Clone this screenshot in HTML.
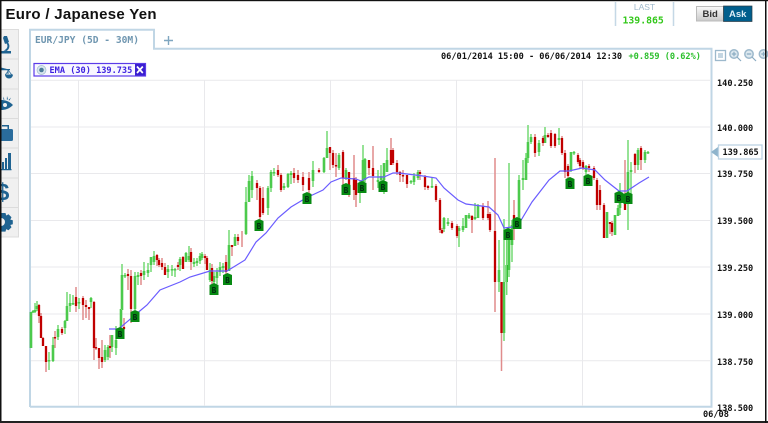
<!DOCTYPE html>
<html><head><meta charset="utf-8"><style>
html,body{margin:0;padding:0;background:#fff;width:768px;height:423px;overflow:hidden}
svg{display:block}
.m{font-family:"DejaVu Sans Mono","Liberation Mono",monospace;font-weight:bold;font-size:8.6px}
.a{fill:#111}
</style></head><body>
<svg width="768" height="423" viewBox="0 0 768 423" xmlns="http://www.w3.org/2000/svg">
<rect width="768" height="423" fill="#fff"/>
<!-- sidebar -->
<g fill="#f0f0f0" stroke="#dcdcdc" stroke-width="1">
<rect x="1" y="29.500" width="17.500" height="29.500"/><rect x="1" y="59" width="17.500" height="30"/><rect x="1" y="89" width="17.500" height="29.500"/><rect x="1" y="118.500" width="17.500" height="29.500"/><rect x="1" y="148" width="17.500" height="30"/><rect x="1" y="178" width="17.500" height="29.500"/><rect x="1" y="207.500" width="17.500" height="29.500"/>
</g>
<g fill="#1f6391" stroke="none">
<!-- microscope -->
<path d="M1 51h10v2.500H1zM4 36h3l2 6-4 2-2-6z"/>
<path d="M7.500 42a5.500 5.500 0 0 1-1 9l-3-.5a4 4 0 0 0 2-1 4 4 0 0 0 .500-6.500z" />
<!-- scales -->
<path d="M1 67.500l6 1.500 3 0v1.300H1zM7.500 70h1v4h-1zM5 74.500h8a4 4 0 0 1-8 0z"/>
<path d="M8.500 70l-3.500 4.500h1l2.500-3.500 2.500 3.500h1z"/>
<!-- eye -->
<path fill-rule="evenodd" d="M1 100c4 0 8 1 12 5-4 4-8 5-12 5zM3 105a2 2 0 1 0 4 0 2 2 0 1 0-4 0z"/>
<path d="M3 96.500l1.500 3-1 .300zM7 96l1 3.500-1.200 0zM11 97.500l-1.500 3-1-.500z"/>
<!-- briefcase -->
<path d="M1 129h10.500a1.500 1.500 0 0 1 1.500 1.500v9a1.500 1.500 0 0 1-1.500 1.500H1z" fill="#2a6c9c"/>
<path d="M2 125h7v4H7.500v-2.500H2z"/>
<!-- chart -->
<path d="M2 162h2v7H2zM5 158h2v11H5zM8 153h3v16H8zM1 169h10.500v1.300H1z"/>
<!-- gear -->
<path fill-rule="evenodd" d="M1 213h4.500l.700 2.500 2.300-1.200 3 3-1.200 2.300 2.500.700v4l-2.500.700 1.200 2.300-3 3-2.300-1.200-.700 2.500H1zM1 218v8a4 4 0 0 0 0-8z"/>
</g>
<text x="-4" y="200" font-family="'Liberation Sans',sans-serif" font-weight="bold" font-size="24" fill="#1f6391">$</text>
<!-- frame -->
<rect x="0" y="0" width="768" height="1.200" fill="#111"/>
<rect x="0" y="0" width="1.500" height="423" fill="#111"/>
<rect x="0" y="421" width="768" height="2" fill="#222"/>
<rect x="765" y="0" width="1.500" height="423" fill="#111"/>
<!-- title -->
<text x="5.500" y="19" font-family="'Liberation Sans',sans-serif" font-weight="bold" font-size="15" letter-spacing=".3" fill="#111">Euro / Japanese Yen</text>
<!-- last -->
<path d="M615.500 2V26M673.500 2V26" stroke="#c5d8e6" stroke-width="1.500"/>
<text x="644.500" y="10" text-anchor="middle" font-family="'Liberation Sans',sans-serif" font-size="8.500" fill="#9fb9cc">LAST</text>
<text x="622.500" y="23.500" font-family="'DejaVu Sans Mono',monospace" font-weight="bold" font-size="9.800" fill="#33c81a">139.865</text>
<!-- bid/ask -->
<defs><linearGradient id="bg" x1="0" y1="0" x2="0" y2="1"><stop offset="0" stop-color="#fafafa"/><stop offset="1" stop-color="#c9c9c9"/></linearGradient></defs>
<rect x="696.500" y="6.500" width="27" height="14.500" fill="url(#bg)" stroke="#bbb"/>
<rect x="723.500" y="6" width="28.500" height="15.500" fill="#005e8c" stroke="#2b3a44" stroke-width=".7"/>
<text x="702.500" y="17.200" font-family="'Liberation Sans',sans-serif" font-weight="bold" font-size="9.500" fill="#333">Bid</text>
<text x="729" y="17.200" font-family="'Liberation Sans',sans-serif" font-weight="bold" font-size="9.500" fill="#dfeef6">Ask</text>
<!-- plot frame -->
<path d="M30 407V29.700H154V48.700H711.500V406.700H30" fill="none" stroke="#c0d6e5" stroke-width="2"/>
<text x="35" y="43" font-family="'DejaVu Sans Mono',monospace" font-weight="bold" font-size="9.600" fill="#6f96b0">EUR/JPY (5D - 30M)</text>
<path d="M164 40.500h9M168.500 36v9" stroke="#7fa6c0" stroke-width="1.400"/>
<!-- grid -->
<path d="M31 80.300H711M31 127H711M31 173.500H711M31 220.500H711M31 267H711M31 314H711M31 360.800H711M78.500 80V406M204.500 80V406M330.500 80V406M456.500 80V406M582.500 80V406" stroke="#e9e9ec" stroke-width="1"/>
<!-- header text -->
<text x="441" y="59" class="m" fill="#111">06/01/2014 15:00 - 06/06/2014 12:30</text>
<text x="628.500" y="59" class="m" fill="#2bbf2b">+0.859 (0.62%)</text>
<!-- legend -->
<rect x="34" y="63.500" width="111.500" height="12.500" fill="#f8f7ff" stroke="#5a3be8" stroke-width="1.200"/>
<circle cx="41.500" cy="70" r="4.500" fill="#d8e6ee" stroke="#9fbccc" stroke-width=".7"/><circle cx="41.500" cy="70" r="2.300" fill="#4d7d99"/>
<text x="49.500" y="73" class="m" fill="#3b1fe0">EMA (30) 139.735</text>
<rect x="135" y="64" width="10" height="11.500" fill="#3a1fd0"/>
<path d="M137 66.500l5.800 6.500M142.800 66.500l-5.800 6.500" stroke="#fff" stroke-width="1.700"/>
<!-- tool icons -->
<g fill="none" stroke="#9db9cc" stroke-width="1.300">
<rect x="715.500" y="50.500" width="10" height="10"/>
</g>
<rect x="718" y="53" width="5" height="5" fill="#c4d6e2"/>
<g fill="#dce8ef" stroke="#9db9cc" stroke-width="1.500">
<circle cx="734" cy="54" r="4.200"/><circle cx="749" cy="54" r="4.200"/><circle cx="763.500" cy="54" r="4.200"/>
</g>
<path d="M737 57l4 4M752 57l4 4M731.800 54h4.400M734 51.800v4.400M746.800 54h4.400M761.300 54h4.400M763.500 51.800v4.400" stroke="#8aacc2" stroke-width="1.200"/>
<rect x="765" y="40" width="1.500" height="30" fill="#111"/>
<!-- candle wicks -->
<g fill="none">
<path stroke="#74da74" stroke-width="1.500" d="M31 312V348M33 310V313M35 303V313M37 301V311M49 352V370M53 337V362M58 325V340M65 320V334M67 292V321M70 294V312M73 295V305M79 298V309M91 297V308M105 345V362M108 345V360M112 335V352M116 326V355M121 309V335M122 264V300M125 273V278M135 272V310M138 272V285M144 262V280M148 263V277M151 258V272M154 251V265M168 265V278M172 265V276M175 268V277M180 257V271M186 252V262M189 246V262M194 258V267M197 258V266M200 253V264M202 252V260M210 263V282M214 272V285M217 268V284M220 262V276M223 263V273M229 230V271M235 234V245M246 187V235M249 175V202M252 171V198M268 186V215M271 170V192M274 168V176M284 183V190M288 173V188M291 171V184M313 161V187M324 157V173M327 131V158M339 153V170M346 168V180M360 180V203M363 145V180M365 158V182M378 170V188M381 165V190M384 163V194M387 148V170M411 180V184M414 173V185M418 170V180M432 177V188M444 217V232M448 218V226M459 226V247M463 218V232M466 215V228M469 213V219M475 203V220M478 204V218M499 240V292M504 219V341M506.700 240V295M509 163V277M512 220V262M519 175V227M523 160V190M526 153V180M528 125V163M531 134V144M539 140V156M545 127V143M559 128V145M571 152V172M574 151V155M586 165V175M607 213V238M615 215V235M618 205V216M620 183V215M628 140V230M631 162V200M638 148V170M645 150V163M648 151V154"/>
<path stroke="#e08c8c" stroke-width="1.500" d="M39 304V323M41 313V338M43 337V346M46 346V372M55 331V348M62 327V335M76 287V312M83 296V320M86 300V318M89 307V320M94 301V360M96 338V350M99 348V369M102 340V368M110 335V358M124 318V330M128 269V290M131 270V323M141 270V285M157 254V266M159 258V267M162 258V270M165 263V275M178 262V270M183 256V269M191 248V270M205 254V264M207 256V270M212 264V284M226 255V282M232 245V256M238 234V245M242 231V247M257 180V200M260 186V220M263 187V215M278 165V177M281 173V192M294 168V183M298 170V183M303 172V191M309 172V198M319 168V173M330 147V170M333 150V168M336 153V177M343 150V187M349 172V197M354 155V200M356 177V207M369 160V175M373 146V190M391 138V163M393 148V165M397 160V175M400 171V182M403 170V182M407 175V188M420 170V180M425 175V190M428 185V190M436 184V202M440 198V233M442 228V234M452 221V230M457 224V238M472 215V233M483 203V220M488 201V220M490 212V232M495 158V312M501.500 282V371M514 200V240M535 134V157M543 136V146M548 133V138M551 130V148M555 133V148M562 136V155M565 150V178M568 164V178M578 153V164M580 158V168M583 160V170M589 164V172M594 166V180M597 178V210M600 185V210M604 203V238M610 222V234M612 221V236M625 160V210M635 153V173M641 146V170"/>
<!-- green bodies -->
<g stroke="#28bb28" stroke-width="2.500">
<path id="gb" d="M31 312V348M33 311V312.500M35 310V312M37 306V309M49 360V361.500M53 345V361M58 329V337M65 321V328M67 306V321M70 303V306M73 303V304.500M79 302V303.500M91 298V302M105 350V360M108 347V357M112 335V347M116 340V348M121 309V327M122 275V310M125 275V276.500M135 276V309M138 275V277M144 271V275M148 270V273M151 257V265M154 256V262M168 269V272M172 269V270.500M175 269V270.500M180 259V265M186 253V262M189 256V260M194 262V264M197 261V263M200 256V261M202 254V258M210 270V280M214 276V282M217 272V278M220 267V272M223 266V268M229 245V271M235 237V246M246 202V234M249 181V202M252 176V190M268 188V208M271 172V188M274 172V173.500M284 186V188M288 174V187M291 173V175M313 170V181M324 158V172M327 148V158M339 155V168M346 170V178M360 190V192M363 160V182M365 159V180M378 180V182M381 176V180M384 163V180M387 160V172M411 181V182.500M414 176V182M418 172V178M432 186V187.500M444 218V229M448 222V224M459 228V231M463 226V230M466 215V228M469 215V218M475 217V219M478 206V218M499 270V282M504 282V333M506.700 265V282M509 240V270M512 225V245M519 180V222M523 178V180M526 158V180M528 142V158M531 137V142M539 143V152M545 135V143M559 138V140M571 152V170M574 152V153.500M586 166V172M607 212V238M615 215V235M618 208V216M620 195V208M628 172V200M631 170V172M638 150V165M645 152V160M648 152V153.500"/>
</g>
<use href="#gb" stroke="#90e690" stroke-width=".7"/>
<!-- red bodies -->
<path stroke="#c00000" stroke-width="2.300" d="M39 305V316M41 316V338M43 338V346M46 346V362M55 337V338.500M62 329V333M76 297V306M83 298V305M86 305V307M89 307V309M94 302V348M96 347V348.500M99 348V358M102 357V362M110 346V348M124 327V329M128 274V276M131 276V309M141 273V276M157 255V260M159 260V265M162 263V267M165 267V275M178 265V267M183 257V269M191 252V262M205 256V258M207 258V270M212 268V281M226 262V272M232 245V247M238 237V241M257 183V188M260 188V217M263 198V213M278 170V175M281 175V190M294 173V178M298 175V180M303 177V185M309 178V190M319 170V172M330 147V153M333 153V165M336 165V166.500M343 152V178M349 172V185M354 178V190M356 180V195M369 160V168M373 168V176M391 150V165M393 150V163M397 163V172M400 172V175M403 175V176.500M407 175V184M420 172V174M425 177V187M428 186V188M436 186V200M440 200V230M442 230V233M452 223V228M457 226V236M472 216V220M483 206V218M488 214V218M490 214V230M495 231V282M501.500 282V333M514 215V228M535 137V153M543 138V143M548 135V137M551 133V146M555 134V146M562 138V153M565 153V172M568 166V176M578 155V162M580 160V166M583 162V168M589 166V168M594 168V178M597 180V205M600 190V205M604 205V238M610 222V224M612 223V232M625 195V210M635 154V165M641 148V160"/>
</g>
<!-- EMA -->
<polyline fill="none" stroke="#6a5cff" stroke-width="1.200" points="109,329 119,329 121,327 135,315 147,305 160,290 180,282 190,277 210,271 227,271 245,260 256,242 266,233 278,218 291,207 306,198 323,190 331,182 341,178 356,179 361,181 369,177 384,177 393,173 399,173 423,176 436,178 444,188 458,200 466,204 489,207 498,215 504,228 512,227 520,222 532,202 549,180 560,171 569,171 582,168 595,170 605,180 619,191 627,191 639,183 649,177"/>
<!-- B markers -->
<g fill="#078a12">
<path d="M120 327l4.500 2v10h-9v-10z"/><path d="M135 310l4.500 2v10h-9v-10z"/><path d="M214 283l4.500 2v10h-9v-10z"/><path d="M227.500 273l4.500 2v10h-9v-10z"/><path d="M259 219l4.500 2v10h-9v-10z"/><path d="M307 192l4.500 2v10h-9v-10z"/><path d="M346 183l4.500 2v10h-9v-10z"/><path d="M362 181l4.500 2v10h-9v-10z"/><path d="M383 180l4.500 2v10h-9v-10z"/><path d="M508 228l4.500 2v10h-9v-10z"/><path d="M517 217l4.500 2v10h-9v-10z"/><path d="M570 177l4.500 2v10h-9v-10z"/><path d="M588 174l4.500 2v10h-9v-10z"/><path d="M619 191l4.500 2v10h-9v-10z"/><path d="M628 192l4.500 2v10h-9v-10z"/>
</g>
<g font-family="'DejaVu Sans Mono',monospace" font-weight="bold" font-size="7.500" fill="#021" text-anchor="middle">
<text x="120" y="337">B</text><text x="135" y="320">B</text><text x="214" y="293">B</text><text x="227.500" y="283">B</text><text x="259" y="229">B</text><text x="307" y="202">B</text><text x="346" y="193">B</text><text x="362" y="191">B</text><text x="383" y="190">B</text><text x="508" y="238">B</text><text x="517" y="227">B</text><text x="570" y="187">B</text><text x="588" y="184">B</text><text x="619" y="201">B</text><text x="628" y="202">B</text>
</g>
<!-- axis -->
<g>
<text x="717" y="86" class="m a">140.250</text>
<text x="717" y="131" class="m a">140.000</text>
<text x="717" y="177" class="m a">139.750</text>
<text x="717" y="224" class="m a">139.500</text>
<text x="717" y="271" class="m a">139.250</text>
<text x="717" y="318" class="m a">139.000</text>
<text x="717" y="365" class="m a">138.750</text>
<text x="717" y="411" class="m a">138.500</text>
<text x="703" y="417" class="m a">06/08</text>
</g>
<!-- price tag -->
<path d="M711 152l7-5v10z" fill="#8fb4cc"/>
<rect x="718.500" y="145" width="43.500" height="14" fill="#fff" stroke="#bcd3e3" stroke-width="1.300"/>
<text x="722.500" y="155" class="m a">139.865</text>
</svg>
</body></html>
